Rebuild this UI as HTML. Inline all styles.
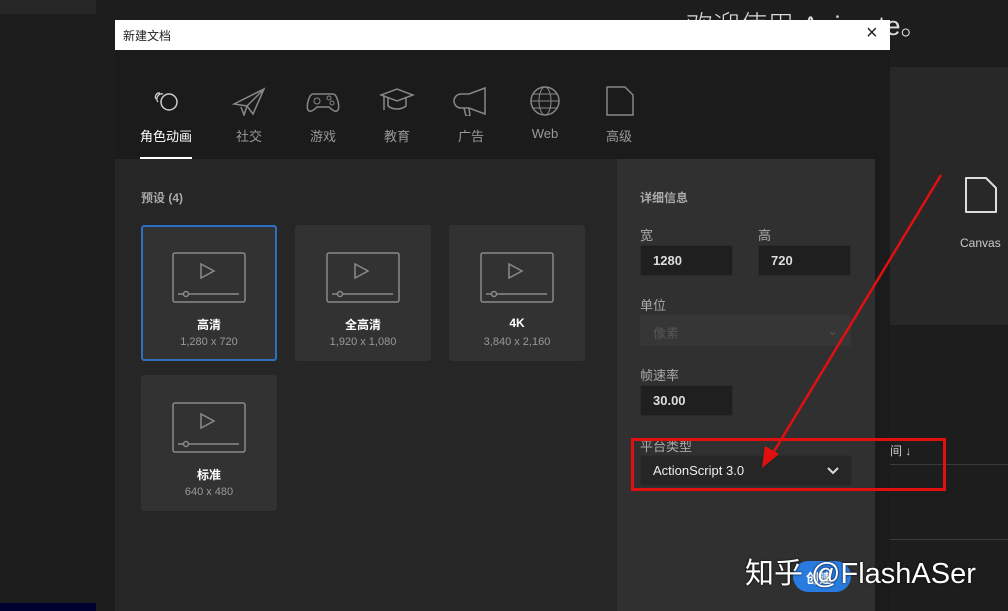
<!DOCTYPE html>
<html><head><meta charset="utf-8"><style>
*{margin:0;padding:0;box-sizing:border-box}
body{width:1008px;height:611px;overflow:hidden;background:#1d1d1d;position:relative;font-family:"Liberation Sans","Noto Sans CJK SC",sans-serif;color:#ccc}
.a{position:absolute}
.card{position:absolute;width:136px;height:136px;background:#323232;border-radius:3px;text-align:center}
.card.sel{border:2px solid #2f6fbf}
.card svg{position:absolute;left:31px;top:27px}
.card .t{position:absolute;left:0;right:0;top:91px;font-size:12px;color:#fff;font-weight:bold}
.card .s{position:absolute;left:0;right:0;top:111px;font-size:11px;color:#999}
.tab{position:absolute;top:86px;width:60px;text-align:center;font-size:13px;color:#999}
.tab svg{display:block;margin:0 auto 10px}
.lbl{position:absolute;font-size:13px;color:#aaa}
.inp{position:absolute;height:31px;background:#1f1f1f;border:1px solid #2a2a2a;border-radius:2px;font-size:13px;color:#ddd;font-weight:bold;padding:7px 12px}
</style></head><body>
<div class="a" style="left:0;top:0;width:96px;height:14px;background:#262626"></div>
<div class="a" style="left:0;top:603px;width:96px;height:8px;background:#000030"></div>
<div class="a" style="left:686px;top:4px;font-size:27px;color:#ddd;font-weight:300">欢迎使用 Animate。</div>
<div class="a" style="left:890px;top:67px;width:118px;height:258px;background:#282828"></div>
<svg class="a" style="left:964px;top:176px" width="34" height="38"><path d="M2 2h20l10 10v24H2z" fill="none" stroke="#ddd" stroke-width="2" stroke-linejoin="round"/></svg>
<div class="a" style="left:960px;top:236px;font-size:12px;color:#ccc">Canvas</div>
<div class="a" style="left:890px;top:442px;font-size:12px;color:#ccc">间 ↓</div>
<div class="a" style="left:890px;top:464px;width:118px;height:1px;background:#3a3a3a"></div>
<div class="a" style="left:890px;top:539px;width:118px;height:1px;background:#3a3a3a"></div>
<!-- dialog -->
<div class="a" style="left:115px;top:20px;width:775px;height:30px;background:#fff"></div>
<div class="a" style="left:123px;top:27px;font-size:12px;color:#222">新建文档</div>
<div class="a" style="left:866px;top:22px;font-size:20px;color:#222">×</div>
<div class="a" style="left:115px;top:51px;width:775px;height:560px;background:#1b1b1b"></div>
<div class="a" style="left:115px;top:159px;width:760px;height:452px;background:#262626"></div>
<div class="a" style="left:617px;top:159px;width:258px;height:452px;background:#303030"></div>
<!-- tabs -->
<div class="tab" style="left:136px;color:#fff"><svg width="34" height="30"><circle cx="20" cy="16" r="8" fill="none" stroke="#ccc" stroke-width="1.5"/><path d="M14 8a5 5 0 0 0-5 8M11 7a4 4 0 0 0-4 6" fill="none" stroke="#ccc" stroke-width="1.3"/></svg>角色动画</div>
<div class="a" style="left:140px;top:157px;width:52px;height:2px;background:#fff"></div>
<div class="tab" style="left:219px"><svg width="36" height="30"><path d="M3 18L33 3 22 28 16 20zM16 20l17-17M10 21l3 8 3-9" fill="none" stroke="#888" stroke-width="1.5"/></svg>社交</div>
<div class="tab" style="left:293px"><svg width="36" height="30"><path d="M8 8h20c4 0 7 12 5 16-2 3-6 0-9-3H12c-3 3-7 6-9 3-2-4 1-16 5-16z" fill="none" stroke="#888" stroke-width="1.5"/><circle cx="12" cy="15" r="3" fill="none" stroke="#888"/><circle cx="24" cy="12" r="2" fill="none" stroke="#888"/><circle cx="27" cy="17" r="2" fill="none" stroke="#888"/></svg>游戏</div>
<div class="tab" style="left:367px"><svg width="36" height="30"><path d="M2 9l16-6 16 6-16 6zM9 12v8c5 4 13 4 18 0v-8M5 10v14" fill="none" stroke="#888" stroke-width="1.5"/></svg>教育</div>
<div class="tab" style="left:441px"><svg width="36" height="30"><path d="M8 8h8l16-6v26l-16-6H8a7 7 0 0 1 0-14zM11 22l2 8h4l-1-8" fill="none" stroke="#888" stroke-width="1.5"/></svg>广告</div>
<div class="tab" style="left:515px"><svg width="36" height="30"><circle cx="18" cy="15" r="14" fill="none" stroke="#888" stroke-width="1.5"/><ellipse cx="18" cy="15" rx="6" ry="14" fill="none" stroke="#888"/><path d="M4 15h28M6 8h24M6 22h24" stroke="#888"/></svg>Web</div>
<div class="tab" style="left:589px"><svg width="36" height="30"><path d="M6 1h18l8 8v20H6z" fill="none" stroke="#888" stroke-width="1.5" stroke-linejoin="round"/></svg>高级</div>
<!-- presets -->
<div class="a" style="left:141px;top:189px;font-size:12px;color:#aaa;font-weight:bold">预设 (4)</div>
<svg width="0" height="0" style="position:absolute"><defs><g id="v"><rect x="1" y="1" width="72" height="49" rx="2" fill="none" stroke="#8a8a8a" stroke-width="1.5"/><path d="M29 12v14l13-7z" fill="none" stroke="#8a8a8a" stroke-width="1.5"/><path d="M6 42h5M17 42h50" stroke="#8a8a8a" stroke-width="1.5"/><circle cx="14" cy="42" r="2.5" fill="none" stroke="#8a8a8a" stroke-width="1.5"/></g></defs></svg>
<div class="card sel" style="left:141px;top:225px"><svg width="74" height="51" style="left:29px;top:25px"><use href="#v"/></svg><div class="t" style="top:89px">高清</div><div class="s" style="top:109px">1,280 x 720</div></div>
<div class="card" style="left:295px;top:225px"><svg width="74" height="51"><use href="#v"/></svg><div class="t">全高清</div><div class="s">1,920 x 1,080</div></div>
<div class="card" style="left:449px;top:225px"><svg width="74" height="51"><use href="#v"/></svg><div class="t">4K</div><div class="s">3,840 x 2,160</div></div>
<div class="card" style="left:141px;top:375px"><svg width="74" height="51"><use href="#v"/></svg><div class="t">标准</div><div class="s">640 x 480</div></div>
<!-- details -->
<div class="lbl" style="left:640px;top:189px;font-size:12px;font-weight:bold">详细信息</div>
<div class="lbl" style="left:640px;top:225px">宽</div>
<div class="lbl" style="left:758px;top:225px">高</div>
<div class="inp" style="left:640px;top:245px;width:93px">1280</div>
<div class="inp" style="left:758px;top:245px;width:93px">720</div>
<div class="lbl" style="left:640px;top:295px">单位</div>
<div class="inp" style="left:640px;top:315px;width:211px;background:#363636;border-color:#363636;color:#555;font-weight:normal">像素<span style="float:right">⌄</span></div>
<div class="lbl" style="left:640px;top:365px">帧速率</div>
<div class="inp" style="left:640px;top:385px;width:93px">30.00</div>
<div class="lbl" style="left:640px;top:436px">平台类型</div>
<div class="inp" style="left:640px;top:455px;width:212px;background:#262626;border-color:#2c2c2c;color:#eee;font-weight:normal">ActionScript 3.0<svg style="position:absolute;right:12px;top:11px" width="12" height="8"><path d="M1 1l5 5 5-5" fill="none" stroke="#ddd" stroke-width="2"/></svg></div>
<div class="a" style="left:793px;top:561px;width:58px;height:31px;border-radius:16px;background:#2a7be0"></div>
<div class="a" style="left:806px;top:568px;font-size:13px;color:#fff;font-weight:bold">创建</div>
<!-- annotations -->
<div class="a" style="left:631px;top:438px;width:315px;height:53px;border:3px solid #e01010"></div>
<svg class="a" style="left:0;top:0" width="1008" height="611"><line x1="941" y1="175" x2="770" y2="458" stroke="#e01010" stroke-width="2.5"/><path d="M762 468l3-22 14 8z" fill="#e01010"/></svg>
<div class="a" style="left:745px;top:550px;font-size:29px;color:#fff;text-shadow:0 0 2px #000">知乎 @FlashASer</div>
</body></html>
